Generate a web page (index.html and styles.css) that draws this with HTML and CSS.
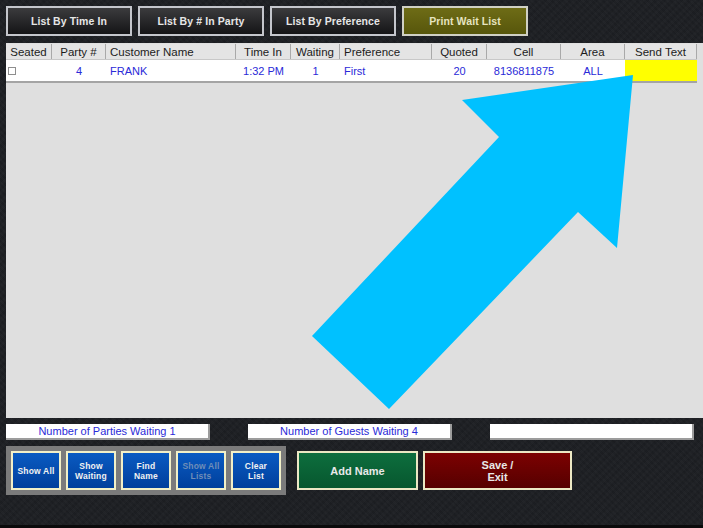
FILE: index.html
```html
<!DOCTYPE html>
<html>
<head>
<meta charset="utf-8">
<link rel="stylesheet" href="styles.css">
</head>
<body>
<div class="page">
  <div class="topbar">
    <div class="tbtn">List By Time In</div>
    <div class="tbtn">List By # In Party</div>
    <div class="tbtn">List By Preference</div>
    <div class="tbtn print">Print Wait List</div>
  </div>
  <div class="grid">
    <div class="table">
      <div class="row head">
        <div class="c c1">Seated</div>
        <div class="c c2">Party #</div>
        <div class="c c3 left">Customer Name</div>
        <div class="c c4">Time In</div>
        <div class="c c5">Waiting</div>
        <div class="c c6 left">Preference</div>
        <div class="c c7">Quoted</div>
        <div class="c c8">Cell</div>
        <div class="c c9">Area</div>
        <div class="c c10">Send Text</div>
      </div>
      <div class="row data">
        <div class="c c1 chk"><span class="box"></span></div>
        <div class="c c2">4</div>
        <div class="c c3 left">FRANK</div>
        <div class="c c4">1:32 PM</div>
        <div class="c c5">1</div>
        <div class="c c6 left">First</div>
        <div class="c c7">20</div>
        <div class="c c8">8136811875</div>
        <div class="c c9">ALL</div>
        <div class="c c10 yellow"></div>
      </div>
    </div>
  </div>
  <div class="info">
    <div class="ibox">Number of Parties Waiting 1</div>
    <div class="ibox">Number of Guests Waiting 4</div>
    <div class="ibox"></div>
  </div>
  <div class="actions">
    <div class="panel">
      <div class="bbtn">Show All</div>
      <div class="bbtn">Show<br>Waiting</div>
      <div class="bbtn">Find<br>Name</div>
      <div class="bbtn disabled">Show All<br>Lists</div>
      <div class="bbtn">Clear<br>List</div>
    </div>
    <div class="bigbtn add">Add Name</div>
    <div class="bigbtn save">Save /<br>Exit</div>
  </div>
  <div class="bottomline"></div>
  <svg class="arrow" width="703" height="528" viewBox="0 0 703 528">
    <polygon points="633,75 462,100 499,137 312,336 389,409 578,212 617,248" fill="#00c1ff"/>
  </svg>
</div>
</body>
</html>
```

FILE: styles.css
```css
* { box-sizing: border-box; }
html, body {
  margin: 0;
  padding: 0;
  width: 703px;
  height: 528px;
  overflow: hidden;
}
body {
  background-color: #1d1f23;
  background-image:
    repeating-linear-gradient(45deg, rgba(255,255,255,0.012) 0 2px, rgba(0,0,0,0.02) 2px 4px),
    repeating-linear-gradient(-45deg, rgba(255,255,255,0.01) 0 3px, rgba(0,0,0,0.018) 3px 6px);
  font-family: "Liberation Sans", Arial, sans-serif;
}
.page {
  position: relative;
  width: 703px;
  height: 528px;
  display: flex;
  flex-direction: column;
}
.topbar {
  display: flex;
  gap: 6px;
  padding: 6px 0 0 6px;
  height: 36px;
}
.tbtn {
  width: 126px;
  height: 30px;
  border: 2px solid #c4c6cc;
  background: linear-gradient(#3b3b3d, #141416);
  color: #e6e6e6;
  font-weight: bold;
  font-size: 10.5px;
  letter-spacing: 0.1px;
  display: flex;
  align-items: center;
  justify-content: center;
}
.tbtn.print {
  background: linear-gradient(#6e6c16, #57560b);
  color: #e6e4c0;
  border-color: #d0d0c4;
}
.grid {
  margin: 7px 0 0 6px;
  width: 697px;
  height: 375px;
  background: #dfdfdf;
}
.table {
  width: 691px;
}
.row {
  display: flex;
}
.c {
  display: flex;
  align-items: center;
  justify-content: center;
  font-size: 11px;
  white-space: nowrap;
}
.c.left { justify-content: flex-start; padding-left: 4px; }
.head {
  height: 16px;
  margin-top: 1px;
  background: #e4e4e4;
  border-bottom: 1px solid #c8c8c8;
}
.head .c {
  color: #1c1c1c;
  font-size: 11.5px;
  border-right: 1px solid #a9a9a9;
}
.data {
  height: 23px;
  background: #ffffff;
  border-bottom: 2px solid #a4a4a4;
}
.data .c { color: #2a2ad8; }
.c1 { width: 46px; }
.c2 { width: 54px; }
.c3 { width: 130px; }
.c4 { width: 55px; }
.c5 { width: 49px; }
.c6 { width: 92px; }
.c7 { width: 55px; }
.c8 { width: 74px; }
.c9 { width: 64px; }
.c10 { width: 72px; }
.chk { justify-content: flex-start; padding-left: 2px; }
.box {
  width: 8px;
  height: 8px;
  border: 1px solid #8e8e8e;
  background: #fff;
  margin-top: 1px;
}
.yellow { background: #ffff00; }
.info {
  display: flex;
  gap: 38px;
  margin: 6px 0 0 6px;
  height: 16px;
}
.ibox {
  width: 204px;
  height: 16px;
  background: #ffffff;
  border-right: 2px solid #9c9c9c;
  border-bottom: 2px solid #9c9c9c;
  color: #2a2ad8;
  font-size: 11px;
  display: flex;
  align-items: center;
  justify-content: center;
}
.actions {
  display: flex;
  margin: 6px 0 0 6px;
  gap: 5px;
}
.panel {
  width: 280px;
  height: 49px;
  background: #7b7b7b;
  padding: 5px;
  display: flex;
  gap: 5px;
  margin-right: 6px;
}
.bbtn {
  width: 50px;
  height: 39px;
  border: 2px solid #f2f0c8;
  background: linear-gradient(#0a5bc2, #003f9c);
  color: #f2f2f2;
  font-weight: bold;
  font-size: 8.5px;
  letter-spacing: 0.2px;
  line-height: 10px;
  text-align: center;
  display: flex;
  align-items: center;
  justify-content: center;
}
.bbtn.disabled { color: #6f8eb8; }
.bigbtn {
  margin-top: 5px;
  height: 39px;
  border: 2px solid #ece8c4;
  color: #e8e8e8;
  font-weight: bold;
  font-size: 11px;
  line-height: 12px;
  text-align: center;
  display: flex;
  align-items: center;
  justify-content: center;
}
.add {
  width: 121px;
  background: linear-gradient(#0d6e3e, #07572e);
}
.save {
  width: 149px;
  background: linear-gradient(#7c0202, #560000);
}
.bottomline {
  position: absolute;
  left: 0;
  bottom: 0;
  width: 703px;
  height: 3px;
  background: #0a0a0b;
}
.arrow {
  position: absolute;
  left: 0;
  top: 0;
  pointer-events: none;
}
```
